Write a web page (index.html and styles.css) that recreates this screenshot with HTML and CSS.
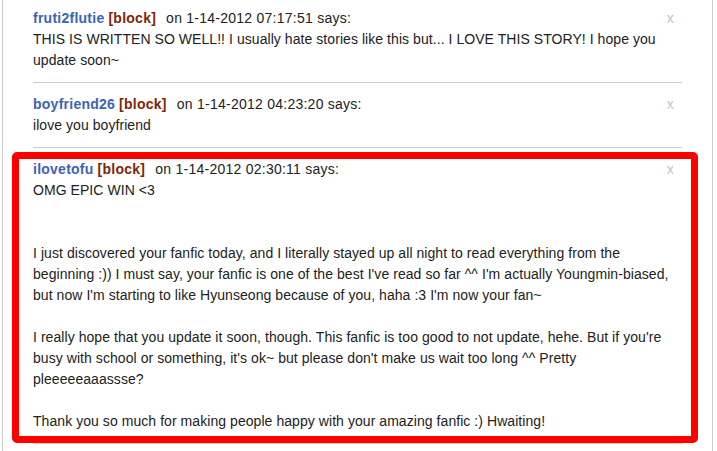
FILE: index.html
```html
<!DOCTYPE html>
<html>
<head>
<meta charset="UTF-8">
<title>Comments</title>
<link rel="stylesheet" href="styles.css">
</head>
<body>
<div class="comments">

	<div class="comment">
		<div class="comment-head">
			<a class="user" href="#">fruti2flutie</a>
			<a class="block" href="#">[block]</a>
			<span class="date">on 1-14-2012 07:17:51 says:</span>
			<a class="close" href="#">x</a>
		</div>
		<div class="comment-body">THIS IS WRITTEN SO WELL!! I usually hate stories like this but... I LOVE THIS STORY! I hope you update soon~</div>
	</div>

	<div class="comment">
		<div class="comment-head">
			<a class="user" href="#">boyfriend26</a>
			<a class="block" href="#">[block]</a>
			<span class="date">on 1-14-2012 04:23:20 says:</span>
			<a class="close" href="#">x</a>
		</div>
		<div class="comment-body">ilove you boyfriend</div>
	</div>

	<div class="comment marked">
		<div class="comment-head">
			<a class="user" href="#">ilovetofu</a>
			<a class="block" href="#">[block]</a>
			<span class="date">on 1-14-2012 02:30:11 says:</span>
			<a class="close" href="#">x</a>
		</div>
		<div class="comment-body">OMG EPIC WIN &lt;3<br><br><br>I just discovered your fanfic today, and I literally stayed up all night to read everything from the beginning :)) I must say, your fanfic is one of the best I've read so far ^^ I'm actually Youngmin-biased, but now I'm starting to like Hyunseong because of you, haha :3 I'm now your fan~<br><br>I really hope that you update it soon, though. This fanfic is too good to not update, hehe. But if you're busy with school or something, it's ok~ but please don't make us wait too long ^^ Pretty pleeeeeaaassse?<br><br>Thank you so much for making people happy with your amazing fanfic :) Hwaiting!</div>
		<div class="highlight"></div>
	</div>

</div>
</body>
</html>
```

FILE: styles.css
```css
body
{
	margin: 0;
	background-color: #ffffff;
	font-family: "Liberation Sans", Arial, sans-serif;
	font-size: 14px;
	line-height: 21px;
	color: #222222;
	overflow: hidden;
}

.comments
{
	margin: -3px 0 0 2px;
	width: 709px;
	height: 470px;
	border-left: 1px solid #cccccc;
	border-right: 1px solid #cccccc;
}

.comment
{
	margin: 0 30px;
	padding: 11px 0;
	border-bottom: 1px solid #cccccc;
	position: relative;
}

.comment-head
{
	display: flex;
	align-items: baseline;
	letter-spacing: 0.25px;
}

.comment-head a
{
	text-decoration: none;
	font-weight: bold;
}

.comment-body
{
	letter-spacing: 0.06px;
}

.user
{
	color: #3d63b6;
}

.block
{
	color: #7f260a;
	margin-left: 4px;
}

.date
{
	margin-left: 10px;
}

.close
{
	margin-left: auto;
	margin-right: 8px;
	font-size: 14px;
	color: #c4c4c4 !important;
	font-weight: normal !important;
}

.comment.marked
{
	border-bottom-color: #f4c8c8;
}

/* red marker drawn over the third comment */
.highlight
{
	position: absolute;
	left: -21px;
	right: -16px;
	top: 4px;
	bottom: 0;
	border: 7px solid #ff0000;
	border-radius: 5px;
	pointer-events: none;
}
```
